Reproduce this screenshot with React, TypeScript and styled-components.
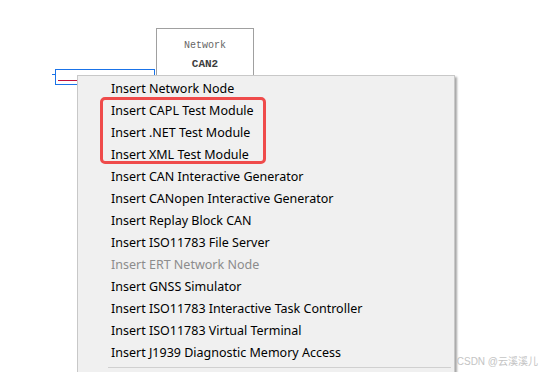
import React from "react";
import styled, { createGlobalStyle } from "styled-components";

const Global = createGlobalStyle`
  html, body { margin: 0; padding: 0; background: #fff; }
  body { width: 542px; height: 372px; overflow: hidden; }
`;

const Canvas = styled.div`
  position: relative;
  width: 542px;
  height: 372px;
  background: #ffffff;
  overflow: hidden;
  font-family: "Noto Sans", "Liberation Sans", sans-serif;
`;

const NetworkBox = styled.div`
  position: absolute;
  left: 156px;
  top: 28px;
  width: 98px;
  height: 80px;
  border: 1px solid #a0a0a0;
  background: #fff;
  display: flex;
  flex-direction: column;
  align-items: center;
  padding-top: 8px;
  box-sizing: border-box;
  font-family: "Liberation Mono", "DejaVu Sans Mono", monospace;
`;

const BoxLabel = styled.div<{ $bold?: boolean }>`
  font-size: ${(p) => (p.$bold ? "11px" : "10px")};
  line-height: 18px;
  font-weight: ${(p) => (p.$bold ? 700 : 400)};
  color: ${(p) => (p.$bold ? "#3c3c3c" : "#666")};
`;

const Selection = styled.div`
  position: absolute;
  left: 55px;
  top: 69px;
  width: 98px;
  height: 14px;
  border: 1px solid #1a73e8;
`;

const SelectionTick = styled.div`
  position: absolute;
  left: 52px;
  top: 74px;
  width: 4px;
  height: 1px;
  background: #1a73e8;
`;

const RedLine = styled.div`
  position: absolute;
  left: 58px;
  top: 80px;
  width: 20px;
  height: 1px;
  background: #c0103a;
`;

const Menu = styled.div`
  position: absolute;
  left: 77px;
  top: 75px;
  width: 378px;
  height: 310px;
  background: #f0f0f0;
  border: 1px solid #c8c8c8;
  box-sizing: border-box;
  box-shadow: 2px 2px 2px rgba(0, 0, 0, 0.35);
  padding: 2px 0 0 33px;
  display: flex;
  flex-direction: column;
`;

const Item = styled.div<{ $disabled?: boolean }>`
  height: 22px;
  line-height: 22px;
  font-size: 12.5px;
  color: ${(p) => (p.$disabled ? "#8c8c8c" : "#000")};
  white-space: nowrap;
`;

const Separator = styled.div`
  margin: 3px 3px 0 -3px;
  height: 1px;
  background: #d0d0d0;
`;

const Highlight = styled.div`
  position: absolute;
  left: 100px;
  top: 97px;
  width: 166px;
  height: 67px;
  border: 3px solid #ef4b4b;
  border-radius: 5px;
  box-sizing: border-box;
`;

const Watermark = styled.div`
  position: absolute;
  right: 4px;
  top: 353px;
  font-size: 10px;
  color: #c4c4c4;
  font-family: "Liberation Sans", "Noto Sans CJK SC", sans-serif;
`;

const items: { label: string; disabled?: boolean }[] = [
  { label: "Insert Network Node" },
  { label: "Insert CAPL Test Module" },
  { label: "Insert .NET Test Module" },
  { label: "Insert XML Test Module" },
  { label: "Insert CAN Interactive Generator" },
  { label: "Insert CANopen Interactive Generator" },
  { label: "Insert Replay Block CAN" },
  { label: "Insert ISO11783 File Server" },
  { label: "Insert ERT Network Node", disabled: true },
  { label: "Insert GNSS Simulator" },
  { label: "Insert ISO11783 Interactive Task Controller" },
  { label: "Insert ISO11783 Virtual Terminal" },
  { label: "Insert J1939 Diagnostic Memory Access" },
];

export default function App() {
  return (
    <Canvas>
      <Global />
      <NetworkBox>
        <BoxLabel>Network</BoxLabel>
        <BoxLabel $bold>CAN2</BoxLabel>
      </NetworkBox>
      <Selection />
      <SelectionTick />
      <RedLine />
      <Menu>
        {items.map((it) => (
          <Item key={it.label} $disabled={it.disabled}>
            {it.label}
          </Item>
        ))}
        <Separator />
      </Menu>
      <Highlight />
      <Watermark>CSDN @云溪溪儿</Watermark>
    </Canvas>
  );
}
